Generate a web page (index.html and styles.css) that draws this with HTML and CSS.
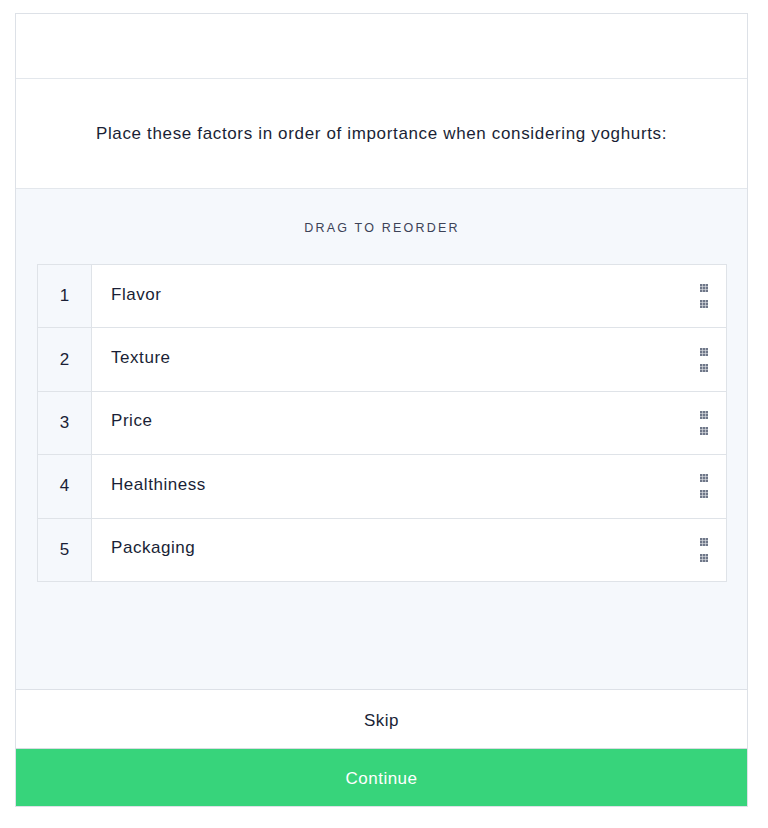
FILE: index.html
```html
<!DOCTYPE html>
<html>
<head>
<meta charset="utf-8">
<link rel="stylesheet" href="styles.css">
</head>
<body>
<div class="card">
  <div class="top"></div>
  <div class="question">Place these factors in order of importance when considering yoghurts:</div>
  <div class="body">
    <div class="label">DRAG TO REORDER</div>
    <div class="list">
      <div class="row"><div class="num">1</div><div class="item"><span>Flavor</span><svg class="grip" width="8" height="24" viewBox="0 0 8 24"><g fill="#6f7789"><rect x="0" y="0" width="2.4" height="2.4"/><rect x="2.8" y="0" width="2.4" height="2.4"/><rect x="5.6" y="0" width="2.4" height="2.4"/><rect x="0" y="2.8" width="2.4" height="2.4"/><rect x="2.8" y="2.8" width="2.4" height="2.4"/><rect x="5.6" y="2.8" width="2.4" height="2.4"/><rect x="0" y="5.6" width="2.4" height="2.4"/><rect x="2.8" y="5.6" width="2.4" height="2.4"/><rect x="5.6" y="5.6" width="2.4" height="2.4"/><rect x="0" y="16" width="2.4" height="2.4"/><rect x="2.8" y="16" width="2.4" height="2.4"/><rect x="5.6" y="16" width="2.4" height="2.4"/><rect x="0" y="18.8" width="2.4" height="2.4"/><rect x="2.8" y="18.8" width="2.4" height="2.4"/><rect x="5.6" y="18.8" width="2.4" height="2.4"/><rect x="0" y="21.6" width="2.4" height="2.4"/><rect x="2.8" y="21.6" width="2.4" height="2.4"/><rect x="5.6" y="21.6" width="2.4" height="2.4"/></g></svg></div></div>
      <div class="row"><div class="num">2</div><div class="item"><span>Texture</span><svg class="grip" width="8" height="24" viewBox="0 0 8 24"><g fill="#6f7789"><rect x="0" y="0" width="2.4" height="2.4"/><rect x="2.8" y="0" width="2.4" height="2.4"/><rect x="5.6" y="0" width="2.4" height="2.4"/><rect x="0" y="2.8" width="2.4" height="2.4"/><rect x="2.8" y="2.8" width="2.4" height="2.4"/><rect x="5.6" y="2.8" width="2.4" height="2.4"/><rect x="0" y="5.6" width="2.4" height="2.4"/><rect x="2.8" y="5.6" width="2.4" height="2.4"/><rect x="5.6" y="5.6" width="2.4" height="2.4"/><rect x="0" y="16" width="2.4" height="2.4"/><rect x="2.8" y="16" width="2.4" height="2.4"/><rect x="5.6" y="16" width="2.4" height="2.4"/><rect x="0" y="18.8" width="2.4" height="2.4"/><rect x="2.8" y="18.8" width="2.4" height="2.4"/><rect x="5.6" y="18.8" width="2.4" height="2.4"/><rect x="0" y="21.6" width="2.4" height="2.4"/><rect x="2.8" y="21.6" width="2.4" height="2.4"/><rect x="5.6" y="21.6" width="2.4" height="2.4"/></g></svg></div></div>
      <div class="row"><div class="num">3</div><div class="item"><span>Price</span><svg class="grip" width="8" height="24" viewBox="0 0 8 24"><g fill="#6f7789"><rect x="0" y="0" width="2.4" height="2.4"/><rect x="2.8" y="0" width="2.4" height="2.4"/><rect x="5.6" y="0" width="2.4" height="2.4"/><rect x="0" y="2.8" width="2.4" height="2.4"/><rect x="2.8" y="2.8" width="2.4" height="2.4"/><rect x="5.6" y="2.8" width="2.4" height="2.4"/><rect x="0" y="5.6" width="2.4" height="2.4"/><rect x="2.8" y="5.6" width="2.4" height="2.4"/><rect x="5.6" y="5.6" width="2.4" height="2.4"/><rect x="0" y="16" width="2.4" height="2.4"/><rect x="2.8" y="16" width="2.4" height="2.4"/><rect x="5.6" y="16" width="2.4" height="2.4"/><rect x="0" y="18.8" width="2.4" height="2.4"/><rect x="2.8" y="18.8" width="2.4" height="2.4"/><rect x="5.6" y="18.8" width="2.4" height="2.4"/><rect x="0" y="21.6" width="2.4" height="2.4"/><rect x="2.8" y="21.6" width="2.4" height="2.4"/><rect x="5.6" y="21.6" width="2.4" height="2.4"/></g></svg></div></div>
      <div class="row"><div class="num">4</div><div class="item"><span>Healthiness</span><svg class="grip" width="8" height="24" viewBox="0 0 8 24"><g fill="#6f7789"><rect x="0" y="0" width="2.4" height="2.4"/><rect x="2.8" y="0" width="2.4" height="2.4"/><rect x="5.6" y="0" width="2.4" height="2.4"/><rect x="0" y="2.8" width="2.4" height="2.4"/><rect x="2.8" y="2.8" width="2.4" height="2.4"/><rect x="5.6" y="2.8" width="2.4" height="2.4"/><rect x="0" y="5.6" width="2.4" height="2.4"/><rect x="2.8" y="5.6" width="2.4" height="2.4"/><rect x="5.6" y="5.6" width="2.4" height="2.4"/><rect x="0" y="16" width="2.4" height="2.4"/><rect x="2.8" y="16" width="2.4" height="2.4"/><rect x="5.6" y="16" width="2.4" height="2.4"/><rect x="0" y="18.8" width="2.4" height="2.4"/><rect x="2.8" y="18.8" width="2.4" height="2.4"/><rect x="5.6" y="18.8" width="2.4" height="2.4"/><rect x="0" y="21.6" width="2.4" height="2.4"/><rect x="2.8" y="21.6" width="2.4" height="2.4"/><rect x="5.6" y="21.6" width="2.4" height="2.4"/></g></svg></div></div>
      <div class="row"><div class="num">5</div><div class="item"><span>Packaging</span><svg class="grip" width="8" height="24" viewBox="0 0 8 24"><g fill="#6f7789"><rect x="0" y="0" width="2.4" height="2.4"/><rect x="2.8" y="0" width="2.4" height="2.4"/><rect x="5.6" y="0" width="2.4" height="2.4"/><rect x="0" y="2.8" width="2.4" height="2.4"/><rect x="2.8" y="2.8" width="2.4" height="2.4"/><rect x="5.6" y="2.8" width="2.4" height="2.4"/><rect x="0" y="5.6" width="2.4" height="2.4"/><rect x="2.8" y="5.6" width="2.4" height="2.4"/><rect x="5.6" y="5.6" width="2.4" height="2.4"/><rect x="0" y="16" width="2.4" height="2.4"/><rect x="2.8" y="16" width="2.4" height="2.4"/><rect x="5.6" y="16" width="2.4" height="2.4"/><rect x="0" y="18.8" width="2.4" height="2.4"/><rect x="2.8" y="18.8" width="2.4" height="2.4"/><rect x="5.6" y="18.8" width="2.4" height="2.4"/><rect x="0" y="21.6" width="2.4" height="2.4"/><rect x="2.8" y="21.6" width="2.4" height="2.4"/><rect x="5.6" y="21.6" width="2.4" height="2.4"/></g></svg></div></div>
    </div>
  </div>
  <div class="skip">Skip</div>
  <div class="continue">Continue</div>
</div>
</body>
</html>
```
FILE: styles.css
```css
* { box-sizing: border-box; }
html, body { margin: 0; padding: 0; background: #fff; }
body {
  font-family: "Liberation Sans", Arial, sans-serif;
  color: #1a1f36;
  padding: 13px 20px 0 15px;
}
.card {
  width: 733px;
  border: 1px solid #dde1e7;
}
.top {
  height: 65px;
  border-bottom: 1px solid #e3e7ec;
}
.question {
  height: 110px;
  display: flex;
  align-items: center;
  justify-content: center;
  font-size: 17px;
  letter-spacing: 0.65px;
  border-bottom: 1px solid #e3e7ec;
}
.body {
  background: #f5f8fc;
  padding: 31px 20px 107px 21px;
  border-bottom: 1px solid #dde1e7;
}
.label {
  text-align: center;
  font-size: 12.5px;
  line-height: 16px;
  letter-spacing: 2.2px;
  color: #3c4257;
  margin-bottom: 28px;
}
.list {
  border: 1px solid #dfe3e8;
  border-bottom: none;
  background: #fff;
}
.row {
  display: flex;
  height: 63.4px;
  border-bottom: 1px solid #dfe3e8;
}
.num {
  width: 54px;
  flex: none;
  display: flex;
  align-items: center;
  justify-content: center;
  font-size: 17px;
  background: #f5f8fc;
  border-right: 1px solid #dfe3e8;
}
.item {
  flex: 1;
  display: flex;
  align-items: center;
  justify-content: space-between;
  padding: 0 18px 0 19px;
  font-size: 17px;
  letter-spacing: 0.55px;
}
.item span { margin-top: -3px; }
.grip { display: block; }
.skip {
  height: 59px;
  display: flex;
  align-items: center;
  justify-content: center;
  padding-top: 4px;
  font-size: 17px;
  letter-spacing: 0.5px;
  border-bottom: 1px solid #d7dbe0;
}
.continue {
  height: 57px;
  display: flex;
  align-items: center;
  justify-content: center;
  padding-top: 4px;
  font-size: 17px;
  letter-spacing: 0.5px;
  background: #37d47b;
  color: #fff;
}
```
